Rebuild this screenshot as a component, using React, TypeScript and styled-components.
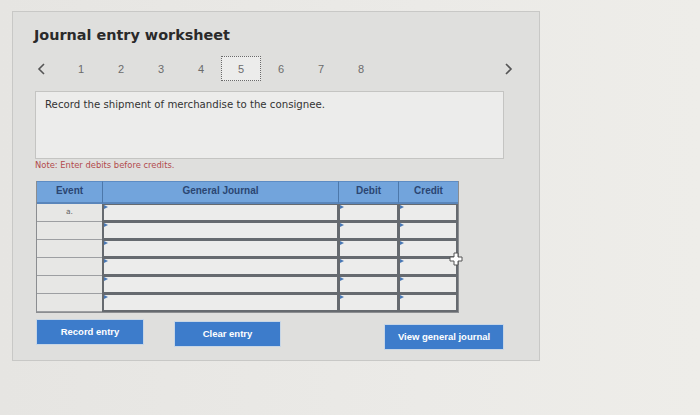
import React from "react";
import styled, { createGlobalStyle } from "styled-components";

const Global = createGlobalStyle`
  html, body { margin: 0; padding: 0; background: #e8e7e4; }
  body { width: 700px; height: 415px; overflow: hidden; font-family: "DejaVu Sans", Verdana, sans-serif; }
`;

const Page = styled.div`
  width: 700px;
  height: 415px;
  padding: 11px 0 0 12px;
  box-sizing: border-box;
  background: linear-gradient(90deg, #e6e5e2 0%, #ebeae7 60%, #eeede9 100%);
`;

const Panel = styled.div`
  position: relative;
  width: 528px;
  height: 350px;
  box-sizing: border-box;
  padding: 13px 35px 0 22px;
  background: #dfdfdd;
  border: 1px solid #c8c8c6;
`;

const Title = styled.h1`
  margin: 0 0 0 -1px;
  font-family: "DejaVu Sans", Verdana, sans-serif;
  font-weight: bold;
  font-size: 14.4px;
  line-height: 20px;
  color: #2a2a2a;
`;

const Nav = styled.div`
  display: flex;
  align-items: center;
  height: 25px;
  margin: 11px 0 0 -14px;
`;

const NavCell = styled.div<{ $active?: boolean }>`
  width: 40px;
  height: 25px;
  box-sizing: border-box;
  display: flex;
  align-items: center;
  justify-content: center;
  font-family: "Liberation Sans", Arial, sans-serif;
  font-size: 11px;
  color: #6b6b6b;
  border: ${(p) => (p.$active ? "1px dotted #6a6a6a" : "1px solid transparent")};
  background: ${(p) => (p.$active ? "#ececeb" : "transparent")};
`;

const Arrow = styled.div<{ $right?: boolean }>`
  width: 40px;
  height: 25px;
  display: flex;
  align-items: center;
  justify-content: center;
  margin-left: ${(p) => (p.$right ? "auto" : "0")};
  margin-right: ${(p) => (p.$right ? "-24px" : "0")};
  color: #555;
`;

const Prompt = styled.div`
  margin-top: 10px;
  height: 68px;
  box-sizing: border-box;
  border: 1px solid #c4c4c2;
  background: #ececeb;
  padding: 7px 9px;
  font-family: "DejaVu Sans", Verdana, sans-serif;
  font-size: 10.2px;
  color: #333;
`;

const Note = styled.div`
  margin-top: 1px;
  font-family: "DejaVu Sans", Verdana, sans-serif;
  font-size: 8.4px;
  line-height: 10px;
  color: #b24a4c;
`;

const Table = styled.div`
  margin: 11px 0 0 1px;
  width: 421px;
  display: grid;
  grid-template-columns: 66px 236px 60px 59px;
  grid-template-rows: 23px repeat(6, 18px);
  border: 1px solid #8b8d90;
  border-top: none;
`;

const Head = styled.div<{ $last?: boolean }>`
  box-sizing: border-box;
  background: #72a4dc;
  border-right: ${(p) => (p.$last ? "none" : "1px solid #4d78aa")};
  border-top: 1px solid #5d8cc4;
  border-bottom: 2px solid #5a86bb;
  display: flex;
  align-items: center;
  justify-content: center;
  padding-bottom: 3px;
  font-family: "Liberation Sans", Arial, sans-serif;
  font-weight: bold;
  font-size: 10px;
  color: #2b4672;
`;

const EventCell = styled.div`
  box-sizing: border-box;
  background: #e7e7e5;
  border-bottom: 1px solid #9d9fa2;
  border-right: 1px solid #8b8d90;
  display: flex;
  align-items: center;
  justify-content: center;
  font-family: "DejaVu Sans", Verdana, sans-serif;
  font-size: 7.5px;
  color: #666;
  padding-bottom: 3px;
`;

const InputCell = styled.div`
  position: relative;
  box-sizing: border-box;
  background: #ececeb;
  border: 2px solid #666a6f;
  border-top-width: 1px;
  margin-left: -1px;
  &::before {
    content: "";
    position: absolute;
    left: 0;
    top: 0;
    border-left: 4px solid #4a78b4;
    border-top: 2px solid transparent;
    border-bottom: 2px solid transparent;
  }
`;

const Buttons = styled.div`
  display: flex;
  align-items: flex-start;
  margin: 7px 0 0 2px;
`;

const Btn = styled.button<{ $w: number; $ml?: number; $mt?: number }>`
  width: ${(p) => p.$w}px;
  height: 24px;
  margin-left: ${(p) => p.$ml ?? 0}px;
  margin-top: ${(p) => p.$mt ?? 0}px;
  border: none;
  background: #3d7ccb;
  color: #fff;
  font-family: "Liberation Sans", Arial, sans-serif;
  font-weight: bold;
  font-size: 9.5px;
  padding: 0 0 2px;
  box-shadow: 0 0 0 1px #c7d6e6;
`;

const Cursor = styled.svg`
  position: absolute;
  left: 436px;
  top: 240px;
`;

const rows = ["a.", "", "", "", "", ""];

export default function App() {
  return (
    <>
      <Global />
      <Page>
        <Panel>
          <Title>Journal entry worksheet</Title>
          <Nav>
            <Arrow>
              <svg width="9" height="12" viewBox="0 0 9 12">
                <path d="M7 1 L2 6 L7 11" fill="none" stroke="#555" strokeWidth="1.6" />
              </svg>
            </Arrow>
            {[1, 2, 3, 4, 5, 6, 7, 8].map((n) => (
              <NavCell key={n} $active={n === 5}>
                {n}
              </NavCell>
            ))}
            <Arrow $right>
              <svg width="9" height="12" viewBox="0 0 9 12">
                <path d="M2 1 L7 6 L2 11" fill="none" stroke="#555" strokeWidth="1.6" />
              </svg>
            </Arrow>
          </Nav>
          <Prompt>Record the shipment of merchandise to the consignee.</Prompt>
          <Note>Note: Enter debits before credits.</Note>
          <Table>
            <Head>Event</Head>
            <Head>General Journal</Head>
            <Head>Debit</Head>
            <Head $last>Credit</Head>
            {rows.map((r, i) => (
              <React.Fragment key={i}>
                <EventCell>{r}</EventCell>
                <InputCell />
                <InputCell />
                <InputCell />
              </React.Fragment>
            ))}
          </Table>
          <Buttons>
            <Btn $w={106}>Record entry</Btn>
            <Btn $w={105} $ml={32} $mt={2}>Clear entry</Btn>
            <Btn $w={118} $ml={105} $mt={5}>View general journal</Btn>
          </Buttons>
          <Cursor width="14" height="14" viewBox="0 0 14 14">
            <path d="M5 1 H9 V5 H13 V9 H9 V13 H5 V9 H1 V5 H5 Z" fill="#fff" stroke="#555" strokeWidth="1" />
          </Cursor>
        </Panel>
      </Page>
    </>
  );
}
